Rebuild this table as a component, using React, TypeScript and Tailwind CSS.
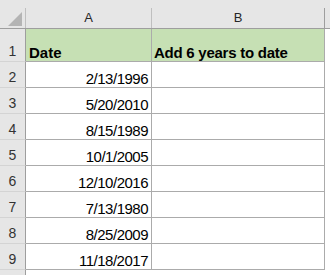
import type { ReactNode } from "react"

const dates = ["2/13/1996", "5/20/2010", "8/15/1989", "10/1/2005", "12/10/2016", "7/13/1980", "8/25/2009", "11/18/2017"]

function RowHead({ children, h }: { children?: ReactNode; h: string }) {
  return (
    <div className={`w-[26px] ${h} shrink-0 bg-[#e6e6e6] border-r border-b border-r-[#9e9e9e] border-b-[#d4d4d4] flex items-end justify-center pb-[1px] text-[14px] leading-[17px] text-[#333]`}>
      {children}
    </div>
  )
}

export default function App() {
  return (
    <div className="w-[330px] h-[275px] overflow-hidden bg-white font-['Liberation_Sans',Arial,sans-serif]">
      {/* Column header */}
      <div className="flex h-[29px] bg-[#e6e6e6] border-b border-[#9e9e9e]">
        <div className="w-[26px] shrink-0 flex flex-col">
          <div className="mt-2 flex-1 border-r border-[#bfbfbf]">
            <svg width="25" height="20" className="block">
              <polygon points="22,4 22,18 8,18" fill="#b4b4b4" />
            </svg>
          </div>
        </div>
        <div className="w-[126px] shrink-0 flex flex-col">
          <div className="mt-2 flex-1 border-r border-[#bfbfbf] flex items-end justify-center pb-[3px] text-[13px] leading-[15px] text-[#262626]">A</div>
        </div>
        <div className="w-[173px] shrink-0 flex flex-col">
          <div className="mt-2 flex-1 border-r border-[#9e9e9e] flex items-end justify-center pb-[3px] text-[13px] leading-[15px] text-[#262626]">B</div>
        </div>
        <div className="flex-1" />
      </div>

      {/* Row 1 */}
      <div className="flex">
        <RowHead h="h-[33px]">1</RowHead>
        <div className="w-[126px] h-[33px] shrink-0 bg-[#c6e0b4] border-r border-b border-[#ababab] flex items-end pl-[3px] text-[15px] leading-[17px] font-bold text-black">Date</div>
        <div className="w-[173px] h-[33px] shrink-0 bg-[#c6e0b4] border-r border-b border-[#ababab] flex items-end pl-[2px] text-[15px] leading-[17px] font-bold tracking-[-0.25px] text-black">Add 6 years to date</div>
      </div>

      {/* Data rows */}
      {dates.map((d, i) => (
        <div key={d} className="flex">
          <RowHead h="h-[26px]">{i + 2}</RowHead>
          <div className="w-[126px] h-[26px] shrink-0 border-r border-b border-[#ababab] flex items-end justify-end pr-[3px] text-[15px] leading-[17px] tracking-[-0.5px] text-black">{d}</div>
          <div className="w-[173px] h-[26px] shrink-0 border-r border-b border-[#ababab]" />
        </div>
      ))}

      <div className="flex">
        <RowHead h="h-[26px]" />
      </div>
    </div>
  )
}
